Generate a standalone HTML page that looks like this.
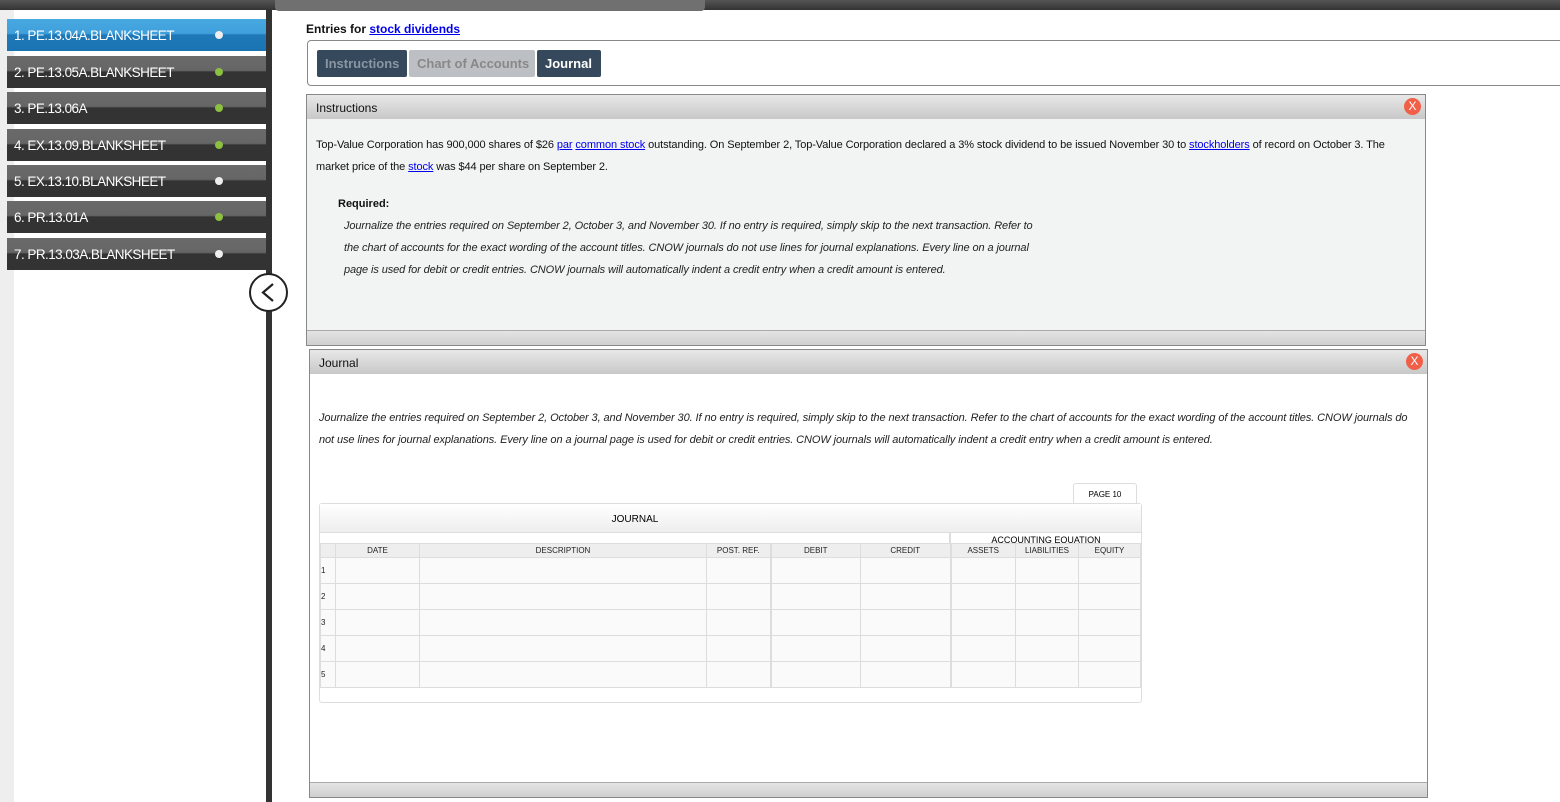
<!DOCTYPE html>
<html><head><meta charset="utf-8"><style>
*{box-sizing:border-box;margin:0;padding:0}
body{width:1560px;height:802px;overflow:hidden;background:#fff;font-family:"Liberation Sans",Arial,sans-serif;position:relative}
.abs{position:absolute}
.topbar{left:0;top:0;width:1560px;height:10px;background:linear-gradient(#555,#333)}
.item{position:absolute;left:7px;width:259px;height:32px;color:#fff;font-size:13.5px;letter-spacing:-0.55px;padding:9px 0 0 7px;background:linear-gradient(#6a6a6a 0,#666 45%,#333 50%,#333 100%)}
.item.act{background:linear-gradient(#48a8e0 0,#3fa0dc 45%,#1e78b8 50%,#1b74b2 100%)}
.dot{position:absolute;left:208px;top:12px;width:8px;height:8px;border-radius:50%;background:#eee}
.dot.g{background:#8cc040}
.btn{position:absolute;top:50px;height:27px;border-radius:2px;font-size:13px;font-weight:bold;padding:6px 0 0 8px}
.panel{position:absolute;border:1px solid #888;background:#f2f3f3}
.ph{height:24px;background:linear-gradient(#e8e8e8,#c8c8c8);font-size:12px;padding:6px 0 0 9px;color:#111}
.x{position:absolute;right:4px;top:3px;width:17px;height:17px;border-radius:50%;background:#f06048;color:#fff;font-size:12px;text-align:center;line-height:17px}
.pf{position:absolute;left:0;right:0;bottom:0;height:15px;background:linear-gradient(#e4e4e4,#cfcfcf);border-top:1px solid #aaa}
a{color:#00e;text-decoration:underline}
.txt{font-size:11px;line-height:22px;color:#111}
.it{font-style:italic;color:#222}
table{border-collapse:collapse;font-size:8px;color:#222}
td{border:1px solid #ddd;background:#fafafa}
</style></head><body>
<div class="abs" style="left:0;top:0;width:14px;height:802px;background:#eee"></div>
<div class="abs topbar"></div>
<div class="abs" style="left:275px;top:0;width:430px;height:11px;background:#707070;border-radius:0 0 4px 4px"></div>
<div class="abs" style="left:266px;top:10px;width:6px;height:792px;background:#333"></div>
<div class="item act" style="top:19px">1. PE.13.04A.BLANKSHEET<span class="dot"></span></div>
<div class="item" style="top:56px">2. PE.13.05A.BLANKSHEET<span class="dot g"></span></div>
<div class="item" style="top:92px">3. PE.13.06A<span class="dot g"></span></div>
<div class="item" style="top:129px">4. EX.13.09.BLANKSHEET<span class="dot g"></span></div>
<div class="item" style="top:165px">5. EX.13.10.BLANKSHEET<span class="dot"></span></div>
<div class="item" style="top:201px">6. PR.13.01A<span class="dot g"></span></div>
<div class="item" style="top:238px">7. PR.13.03A.BLANKSHEET<span class="dot"></span></div>
<div class="abs" style="left:249px;top:273px;width:39px;height:39px;border-radius:50%;border:2px solid #222;background:#fff"><svg width="35" height="35" style="position:absolute;left:0;top:0"><path d="M22 9 L12 17.5 L22 26" stroke="#222" stroke-width="2.2" fill="none"/></svg></div>

<div class="abs" style="left:306px;top:22px;font-size:12px;font-weight:bold;color:#111">Entries for <a>stock dividends</a></div>
<div class="abs" style="left:307px;top:40px;width:1270px;height:46px;border:1px solid #888;border-radius:4px"></div>
<div class="btn" style="left:317px;width:90px;background:#35485c;color:#8a96a4">Instructions</div>
<div class="btn" style="left:409px;width:126px;background:#bcc0c4;color:#888">Chart of Accounts</div>
<div class="btn" style="left:537px;width:64px;background:#35485c;color:#fff">Journal</div>

<div class="panel" style="left:306px;top:94px;width:1120px;height:252px">
<div class="ph">Instructions</div><div class="x">X</div>
<div class="txt" style="padding:15px 0 0 9px;letter-spacing:-0.1px">Top-Value Corporation has 900,000 shares of $26 <a>par</a> <a>common stock</a> outstanding. On September 2, Top-Value Corporation declared a 3% stock dividend to be issued November 30 to <a>stockholders</a> of record on October 3. The<br>market price of the <a>stock</a> was $44 per share on September 2.</div>
<div class="txt" style="padding:15px 0 0 31px;font-weight:bold">Required:</div>
<div class="txt it" style="padding:0 0 0 37px;width:800px;letter-spacing:-0.1px;white-space:nowrap">Journalize the entries required on September 2, October 3, and November 30. If no entry is required, simply skip to the next transaction. Refer to<br>the chart of accounts for the exact wording of the account titles. CNOW journals do not use lines for journal explanations. Every line on a journal<br>page is used for debit or credit entries. CNOW journals will automatically indent a credit entry when a credit amount is entered.</div>
<div class="pf"></div>
</div>

<div class="panel" style="left:309px;top:349px;width:1119px;height:449px;background:#fff">
<div class="ph">Journal</div><div class="x">X</div>
<div class="txt it" style="padding:33px 0 0 9px;white-space:nowrap;letter-spacing:-0.09px">Journalize the entries required on September 2, October 3, and November 30. If no entry is required, simply skip to the next transaction. Refer to the chart of accounts for the exact wording of the account titles. CNOW journals do<br>not use lines for journal explanations. Every line on a journal page is used for debit or credit entries. CNOW journals will automatically indent a credit entry when a credit amount is entered.</div>
<div class="pf"></div>
</div>

<div class="abs" style="left:1073px;top:483px;width:64px;height:21px;border:1px solid #ddd;border-bottom:none;background:#fff;font-size:8px;text-align:center;padding-top:6px;border-radius:3px 3px 0 0">PAGE 10</div>
<div class="abs" style="left:319px;top:503px;width:823px;height:200px;border:1px solid #ddd;border-radius:3px;background:#fff">
<div style="height:29px;background:linear-gradient(#fff,#eee);border-bottom:1px solid #ddd;font-size:10px;padding:10px 0 0 0"><div style="width:630px;text-align:center">JOURNAL</div></div>
<div class="abs" style="left:629px;top:28px;width:192px;height:12px;border-left:2px solid #ddd;font-size:9px;text-align:center;overflow:hidden;line-height:16px">ACCOUNTING EQUATION</div>
<table class="abs" style="left:0;top:39px;width:821px">
<tr style="height:14px;text-align:center"><td style="width:15px;background:#eee"></td><td style="width:84px;background:#eee">DATE</td><td style="width:287px;background:#eee">DESCRIPTION</td><td style="width:64px;background:#eee;border-right:2px solid #ddd">POST. REF.</td><td style="width:90px;background:#eee">DEBIT</td><td style="width:90px;background:#eee;border-right:2px solid #ddd">CREDIT</td><td style="width:65px;background:#eee">ASSETS</td><td style="width:63px;background:#eee">LIABILITIES</td><td style="background:#eee">EQUITY</td></tr>
<tr style="height:26px"><td>1</td><td></td><td></td><td style="border-right:2px solid #ddd"></td><td></td><td style="border-right:2px solid #ddd"></td><td></td><td></td><td></td></tr>
<tr style="height:26px"><td>2</td><td></td><td></td><td style="border-right:2px solid #ddd"></td><td></td><td style="border-right:2px solid #ddd"></td><td></td><td></td><td></td></tr>
<tr style="height:26px"><td>3</td><td></td><td></td><td style="border-right:2px solid #ddd"></td><td></td><td style="border-right:2px solid #ddd"></td><td></td><td></td><td></td></tr>
<tr style="height:26px"><td>4</td><td></td><td></td><td style="border-right:2px solid #ddd"></td><td></td><td style="border-right:2px solid #ddd"></td><td></td><td></td><td></td></tr>
<tr style="height:26px"><td>5</td><td></td><td></td><td style="border-right:2px solid #ddd"></td><td></td><td style="border-right:2px solid #ddd"></td><td></td><td></td><td></td></tr>
</table>
</div>
</body></html>
